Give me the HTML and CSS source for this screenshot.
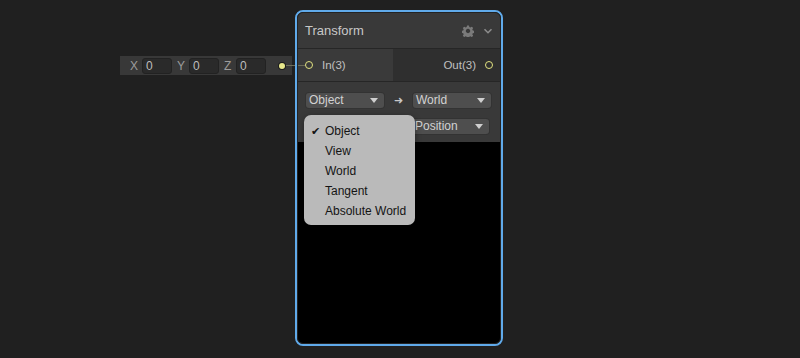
FILE: index.html
```html
<!DOCTYPE html>
<html lang="en">
<head>
    <meta charset="UTF-8">
    <meta name="viewport" content="width=device-width, initial-scale=1.0">
    <title>Transform node</title>
    <link rel="stylesheet" href="styles.css">
</head>
<body>

    <div class="canvas">
        <!-- Inline input for the In port -->
        <div class="inputs">
            <span class="axis">X</span><span class="field">0</span>
            <span class="axis">Y</span><span class="field">0</span>
            <span class="axis">Z</span><span class="field">0</span>
            <span class="wire-dot"></span>
        </div>

        <!-- Node -->
        <div class="node">
            <div class="node-inner">
                <div class="node-header">
                    <span class="node-title">Transform</span>
                    <span class="node-icons">
                        <svg width="12" height="12" viewBox="0 0 12 12">
                            <path fill="#7a7a7a" fill-rule="evenodd" d="M5 0.5h2l0.3 1.6 1.1 0.5 1.4-0.9 1.4 1.4-0.9 1.4 0.5 1.1 1.6 0.3v2l-1.6 0.3-0.5 1.1 0.9 1.4-1.4 1.4-1.4-0.9-1.1 0.5-0.3 1.6h-2l-0.3-1.6-1.1-0.5-1.4 0.9-1.4-1.4 0.9-1.4-0.5-1.1-1.6-0.3v-2l1.6-0.3 0.5-1.1-0.9-1.4 1.4-1.4 1.4 0.9 1.1-0.5z M6 3.8a2.2 2.2 0 1 0 0.01 0z"/>
                        </svg>
                        <svg width="10" height="10" viewBox="0 0 10 10">
                            <polyline points="1.5,3.2 5,6.7 8.5,3.2" fill="none" stroke="#8a8a8a" stroke-width="1.6"/>
                        </svg>
                    </span>
                </div>

                <div class="node-ports">
                    <div class="port port-in">
                        <span class="port-dot"></span>
                        <span>In(3)</span>
                    </div>
                    <div class="port port-out">
                        <span>Out(3)</span>
                        <span class="port-dot"></span>
                    </div>
                </div>

                <div class="node-controls">
                    <div class="control-row">
                        <div class="dropdown">Object</div>
                        <span class="arrow">&#10140;</span>
                        <div class="dropdown">World</div>
                    </div>
                    <div class="control-row">
                        <span class="control-label"></span>
                        <div class="dropdown dropdown-short">Position</div>
                    </div>
                </div>

                <div class="node-preview"></div>
            </div>

            <!-- Open space menu -->
            <ul class="menu">
                <li class="checked">Object</li>
                <li>View</li>
                <li>World</li>
                <li>Tangent</li>
                <li>Absolute World</li>
            </ul>
        </div>
    </div>

</body>
</html>
```

FILE: styles.css
```css
body {
    margin: 0;
    height: 358px;
    overflow: hidden;
    background-color: #202020;
    font-family: "Liberation Sans", Arial, sans-serif;
    color: #c4c4c4;
}

.canvas {
    display: flex;
    align-items: flex-start;
    padding: 10px 0 0 120px;
}

/* Inline XYZ input */
.inputs {
    position: relative;
    display: flex;
    align-items: center;
    width: 172px;
    height: 19px;
    margin-top: 46px;
    padding: 0 7px 0 10px;
    box-sizing: border-box;
    background-color: #383838;
}

.axis {
    width: 12px;
    font-size: 12px;
    color: #9c9c9c;
}

.field {
    width: 30px;
    height: 16px;
    margin-right: 5px;
    padding-left: 3px;
    box-sizing: border-box;
    background-color: #2a2a2a;
    border: 1px solid #222;
    border-radius: 3px;
    font-size: 12px;
    line-height: 14px;
    color: #bdbdbd;
}

.wire-dot {
    position: relative;
    width: 6px;
    height: 6px;
    margin-left: auto;
    border-radius: 50%;
    background-color: #e8e88c;
    box-shadow: 0 0 0 1px #1c1c1c;
}

.wire-dot::after {
    content: "";
    position: absolute;
    left: 7px;
    top: 2px;
    width: 10px;
    height: 1px;
    background-color: #6d6d58;
}

/* Node */
.node {
    position: relative;
    width: 208px;
    height: 336px;
    margin-left: 3px;
    box-sizing: border-box;
    border: 2px solid #60aaea;
    border-radius: 8px;
}

.node-inner {
    display: flex;
    flex-direction: column;
    height: 100%;
    box-sizing: border-box;
    border: 1px solid #232323;
    border-radius: 6px;
    overflow: hidden;
}

.node-header {
    display: flex;
    justify-content: space-between;
    align-items: center;
    height: 35px;
    padding: 0 7px;
    background-color: #393939;
    border-bottom: 1px solid #262626;
}

.node-title {
    font-size: 13px;
    color: #c8c8c8;
}

.node-icons {
    display: flex;
    align-items: center;
    gap: 9px;
}

.node-icons svg {
    display: block;
}

.node-ports {
    display: flex;
    height: 32px;
    border-bottom: 1px solid #262626;
}

.port {
    display: flex;
    align-items: center;
    gap: 9px;
    font-size: 11.5px;
    color: #c0c0c0;
}

.port-in {
    position: relative;
    width: 95px;
    padding-left: 7px;
    box-sizing: border-box;
    background-color: #3a3a3a;
}

.port-in::before {
    content: "";
    position: absolute;
    left: 0;
    top: 16px;
    width: 7px;
    height: 1px;
    background-color: #6d6d58;
}

.port-out {
    flex: 1;
    justify-content: flex-end;
    gap: 9px;
    padding-right: 7px;
    background-color: #2f2f2f;
}

.port-dot {
    width: 6px;
    height: 6px;
    border: 1.5px solid #e2e280;
    border-radius: 50%;
}

.node-controls {
    display: flex;
    flex-direction: column;
    gap: 11px;
    height: 60px;
    padding: 11px 9px 0 8px;
    box-sizing: border-box;
    background-color: #393939;
}

.control-row {
    display: flex;
    align-items: center;
    justify-content: space-between;
}

.dropdown {
    position: relative;
    width: 78px;
    height: 15px;
    padding-left: 3px;
    box-sizing: border-box;
    background-color: #4e4e4e;
    border-radius: 3px;
    box-shadow: 0 0 0 1px #333;
    font-size: 12px;
    line-height: 15px;
    color: #d2d2d2;
}

.dropdown::after {
    content: "";
    position: absolute;
    right: 6px;
    top: 5px;
    border-left: 4px solid transparent;
    border-right: 4px solid transparent;
    border-top: 5px solid #cfcfcf;
}

.dropdown-short {
    width: 77px;
    margin-right: 2px;
}

.arrow {
    font-size: 11px;
    color: #c8c8c8;
}

.control-label {
    width: 60px;
    height: 15px;
}

.node-preview {
    flex: 1;
    background-color: #000;
}

/* Popup menu */
.menu {
    position: absolute;
    left: 7px;
    top: 103px;
    width: 111px;
    height: 110px;
    margin: 0;
    padding: 6px 0 0 0;
    box-sizing: border-box;
    list-style: none;
    background-color: #bababa;
    border-radius: 7px;
    box-shadow: 0 2px 6px rgba(0, 0, 0, 0.4);
}

.menu li {
    height: 20px;
    padding-left: 21px;
    font-size: 12px;
    line-height: 20px;
    color: #141414;
    position: relative;
}

.menu li.checked::before {
    content: "\2714";
    position: absolute;
    left: 7px;
    font-size: 11px;
}
```
